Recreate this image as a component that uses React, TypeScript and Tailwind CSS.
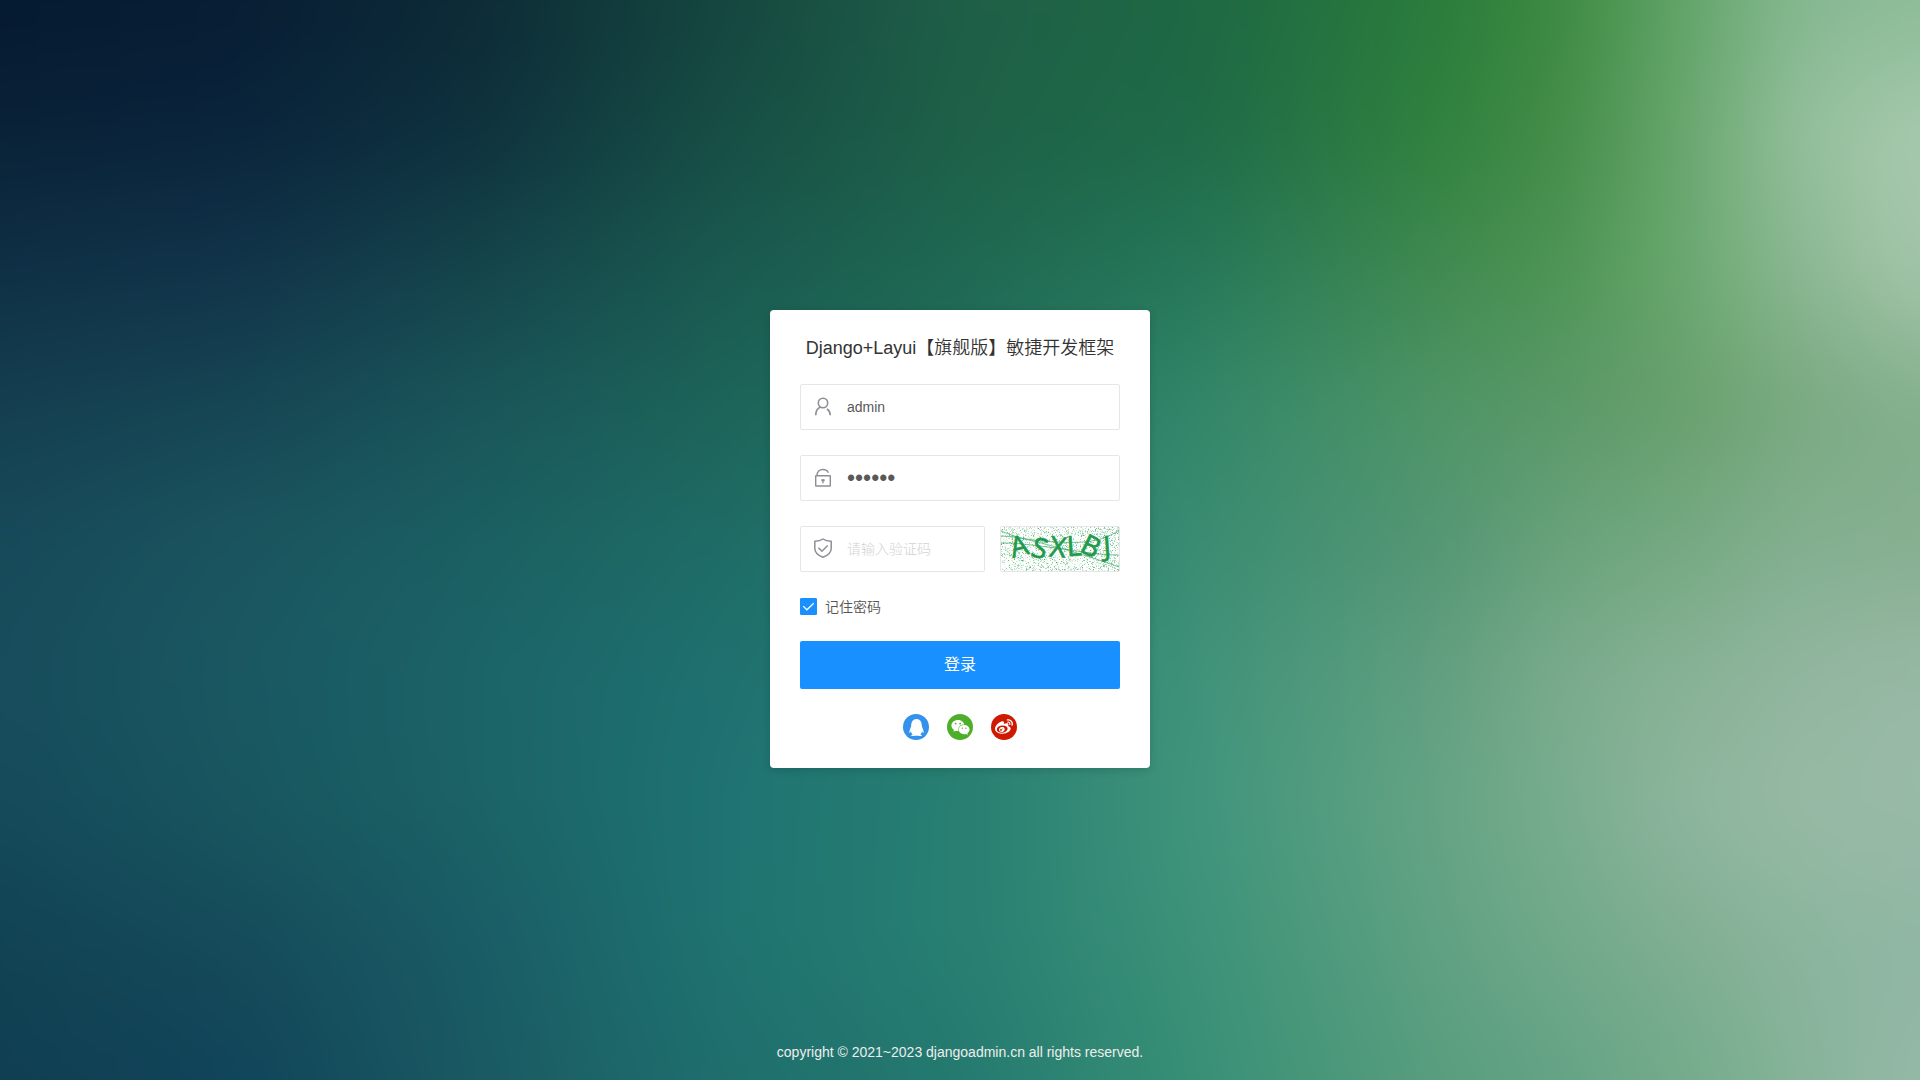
import { useState } from "react";
import { FaQq, FaWeibo, FaWeixin } from "react-icons/fa";

/* Backdrop colours: one row per 1/8 of the height, one colour per entry of STOPS across the width. */
const STOPS = [0, 0.125, 0.25, 0.375, 0.5, 0.625, 0.75, 0.8125, 0.875, 0.9375, 1];
const BACKDROP = [
  ["#051a30", "#081d34", "#0d2b36", "#15463f", "#1f5f48", "#1e6843", "#2a7c3c", "#3c8a40", "#60a468", "#86b891", "#8dbc98"],
  ["#0a2238", "#0a253c", "#0f323e", "#174e45", "#1e6148", "#1f6b48", "#30823e", "#448c48", "#67a66c", "#95c09d", "#a8caaf"],
  ["#0f3045", "#12344a", "#15454b", "#1a5a50", "#1f6852", "#26785a", "#418a50", "#4d9454", "#68a86e", "#8cb893", "#a4c5aa"],
  ["#153f50", "#164654", "#1a565a", "#1d6459", "#23725f", "#33876a", "#4f9566", "#5a9868", "#689f6c", "#79a980", "#84b08e"],
  ["#174a5a", "#1b555f", "#1b6062", "#1f6c66", "#24786a", "#3a8c72", "#549674", "#68a27a", "#74a981", "#83b090", "#86ae8f"],
  ["#184d5c", "#1a5862", "#1c6468", "#1f7170", "#277c70", "#40937a", "#629f80", "#7aab8c", "#88b295", "#92b6a0", "#98b9a5"],
  ["#154a5b", "#18565f", "#1b6366", "#1f7373", "#287f72", "#40957c", "#65a484", "#78ad8f", "#8eb59e", "#97baa4", "#98baa8"],
  ["#114354", "#164b5a", "#1a5c66", "#1f7370", "#287f72", "#3c9278", "#60a182", "#70a98a", "#80ae92", "#8bb59d", "#90b7a4"],
  ["#103e52", "#11445a", "#1a5a62", "#1f6e6d", "#24796f", "#389076", "#589d7e", "#64a285", "#72ab8a", "#86b399", "#96b9a8"],
];

function Backdrop() {
  return (
    <svg
      className="absolute inset-0 h-full w-full"
      viewBox="0 0 1600 900"
      preserveAspectRatio="none"
      aria-hidden="true"
    >
      <defs>
        <filter
          id="soften"
          filterUnits="userSpaceOnUse"
          x="-200"
          y="-200"
          width="2000"
          height="1300"
          colorInterpolationFilters="sRGB"
        >
          <feGaussianBlur stdDeviation="28" />
        </filter>
        {BACKDROP.map((row, i) => (
          <linearGradient key={i} id={`row${i}`} gradientUnits="userSpaceOnUse" x1="0" y1="0" x2="1600" y2="0">
            {row.map((color, j) => (
              <stop key={j} offset={STOPS[j]} stopColor={color} />
            ))}
          </linearGradient>
        ))}
        {BACKDROP.slice(1).map((_, i) => (
          <linearGradient
            key={i}
            id={`fade${i + 1}`}
            gradientUnits="userSpaceOnUse"
            x1="0"
            y1={i * 112.5}
            x2="0"
            y2={(i + 1) * 112.5}
          >
            <stop offset="0" stopColor="#fff" stopOpacity="0" />
            <stop offset="1" stopColor="#fff" stopOpacity="1" />
          </linearGradient>
        ))}
        {BACKDROP.slice(1).map((_, i) => (
          <mask key={i} id={`mask${i + 1}`} maskUnits="userSpaceOnUse" x="-200" y="-200" width="2000" height="1300">
            <rect x="-200" y="-200" width="2000" height="1300" fill={`url(#fade${i + 1})`} />
          </mask>
        ))}
      </defs>
      <g filter="url(#soften)">
        {BACKDROP.map((_, i) => (
          <rect
            key={i}
            x="-200"
            y="-200"
            width="2000"
            height="1300"
            fill={`url(#row${i})`}
            mask={i ? `url(#mask${i})` : undefined}
          />
        ))}
      </g>
    </svg>
  );
}

function UserIcon() {
  return (
    <svg width="18" height="20" viewBox="0 0 18 20" fill="none" stroke="#8e8e96" strokeWidth="1.6" aria-hidden="true">
      <circle cx="9" cy="6" r="4.7" />
      <path d="M1.700 18.200c.1-4.200 2-7.200 5.100-8.200M13 12c2 1.300 3.200 3.500 3.300 6.200" />
    </svg>
  );
}

function LockIcon() {
  return (
    <svg width="18" height="20" viewBox="0 0 18 20" fill="none" stroke="#8e8e96" strokeWidth="1.400" aria-hidden="true">
      <rect x="1.700" y="7.700" width="14.600" height="10.300" rx=".3" />
      <path d="M3 7.700C3 3.700 5.400 1.500 9 1.500c2.600 0 4.500 1.200 5.400 3.300" />
      <path d="M9 11v4.200" strokeWidth="1.400" />
      <path d="M7.300 12.200h3.400" strokeWidth="1.800" />
    </svg>
  );
}

function ShieldIcon() {
  return (
    <svg width="20" height="22" viewBox="0 0 20 22" fill="none" stroke="#8e8e96" strokeWidth="1.500" strokeLinejoin="round" aria-hidden="true">
      <path d="M10 1C7.800 2.500 4.900 3.200 1.800 3.300v7.200c0 3.900 3.500 7 8.200 8.800 4.700-1.800 8.200-4.900 8.200-8.800V3.300C15.100 3.200 12.200 2.500 10 1z" />
      <path d="M5.400 9.800l3.500 3.500 5.800-5.800" />
    </svg>
  );
}

const LETTERS = [
  { char: "A", x: 18, y: 29, turn: -14 },
  { char: "S", x: 39, y: 31, turn: 16 },
  { char: "X", x: 57, y: 30, turn: 6 },
  { char: "L", x: 73, y: 29, turn: -3 },
  { char: "B", x: 90, y: 29, turn: 26 },
  { char: "J", x: 106, y: 29, turn: -4 },
];

/* Speckles come from a fixed seed, so they stay in place between renders. */
function speckles() {
  let seed = 20230;
  const next = () => {
    seed = (seed * 16807) % 2147483647;
    return seed / 2147483647;
  };
  return Array.from({ length: 2400 }, () => ({
    x: Math.floor(next() * 118),
    y: Math.floor(next() * 44),
    alpha: 0.08 + next() * next() * 0.6,
  }));
}
const SPECKLES = speckles();

function Captcha() {
  return (
    <svg viewBox="0 0 118 44" className="block h-11 w-full overflow-visible" aria-hidden="true">
      <rect width="118" height="44" fill="#fff" />
      {SPECKLES.map((dot, i) => (
        <rect key={i} x={dot.x} y={dot.y} width="1" height="1" fill="#1f9a4c" opacity={dot.alpha} />
      ))}
      <g fill="none" stroke="#1f9a4c" strokeOpacity=".6">
        <path d="M0 4c14 6 24 8 40 12s45 12 78 24" />
        <path d="M0 9c20 1 30 5 55 6s45 1 63-12" />
        <path d="M0 16c22 0 36 3 55 5s38 7 63 7" />
      </g>
      <g
        fill="#1f9a4c"
        stroke="#1f9a4c"
        strokeWidth=".7"
        className="font-['Open_Sans',sans-serif] text-[28px] leading-none font-normal"
        textAnchor="middle"
      >
        {LETTERS.map((l) => (
          <text key={l.char} x={l.x} y={l.y} transform={`rotate(${l.turn} ${l.x} ${l.y - 10})`}>
            {l.char}
          </text>
        ))}
      </g>
    </svg>
  );
}

const FIELD =
  "h-[46px] w-full rounded-xs border border-[#e6e6e6] bg-white pr-3 pl-[46px] text-[#595959] outline-none placeholder:font-light placeholder:text-[#d2d2d2] focus:border-[#c9c9c9]";
const FIELD_ICON = "pointer-events-none absolute inset-y-0 left-0 flex w-[46px] items-center justify-center";

export default function App() {
  const [remember, setRemember] = useState(true);

  return (
    <div className="relative flex min-h-screen flex-col overflow-hidden bg-[#1c6568] font-['Liberation_Sans','Noto_Sans_CJK_SC',sans-serif]">
      <Backdrop />
      <main className="relative flex flex-1 items-center justify-center pt-[54px]">
        <form
          className="w-[380px] max-w-full rounded bg-white px-[30px] pt-6 pb-7 shadow-[0_2px_8px_rgba(0,0,0,0.15)]"
          onSubmit={(e) => e.preventDefault()}
        >
          <h1 className="mb-[22px] text-center text-lg leading-7 font-[350] whitespace-nowrap text-[#333]">
            Django+Layui【旗舰版】敏捷开发框架
          </h1>

          <div className="flex flex-col gap-[25px]">
            <label className="relative block text-sm">
              <span className={FIELD_ICON}><UserIcon /></span>
              <input className={FIELD} type="text" aria-label="用户名" defaultValue="admin" />
            </label>
            <label className="relative block text-[23px]">
              <span className={FIELD_ICON}><LockIcon /></span>
              <input className={FIELD} type="password" aria-label="密码" defaultValue="123456" />
            </label>
            <div className="flex gap-[15px]">
              <label className="relative block flex-1 text-sm">
                <span className={FIELD_ICON}><ShieldIcon /></span>
                <input className={FIELD} type="text" aria-label="验证码" placeholder="请输入验证码" />
              </label>
              <button type="button" aria-label="刷新验证码" className="h-[46px] w-[120px] rounded-xs border border-[#e6e6e6]">
                <Captcha />
              </button>
            </div>

            <label className="flex h-[19px] items-center gap-2 text-sm font-[350] text-[#555]">
              <span className="relative size-[17px]">
                <input
                  type="checkbox"
                  checked={remember}
                  onChange={(e) => setRemember(e.target.checked)}
                  className="peer block size-[17px] appearance-none rounded-[1px] border border-[#d2d2d2] bg-white checked:border-[#1890ff] checked:bg-[#1890ff]"
                />
                <svg
                  className="pointer-events-none absolute inset-0 hidden size-[17px] peer-checked:block"
                  viewBox="0 0 17 17"
                  fill="none"
                  stroke="#fff"
                  strokeWidth="1.200"
                  aria-hidden="true"
                >
                  <path d="M3.300 8.300l3.600 3.500 6.800-6.500" />
                </svg>
              </span>
              记住密码
            </label>

            <button type="submit" className="h-12 w-full rounded-xs bg-[#1890ff] text-base font-normal text-white">
              登录
            </button>

            <div className="flex justify-center gap-[18px]">
              <a href="#qq" aria-label="QQ" className="flex size-[26px] items-center justify-center rounded-full bg-[#3492ed] text-white">
                <FaQq size={17} />
              </a>
              <a href="#wechat" aria-label="微信" className="flex size-[26px] items-center justify-center rounded-full bg-[#4daf29] text-white">
                <FaWeixin size={19} />
              </a>
              <a href="#weibo" aria-label="微博" className="flex size-[26px] items-center justify-center rounded-full bg-[#cf1900] text-white">
                <FaWeibo size={18} />
              </a>
            </div>
          </div>
        </form>
      </main>
      <footer className="relative flex h-14 items-center justify-center text-sm text-[#eee]">
        copyright © 2021~2023 djangoadmin.cn all rights reserved.
      </footer>
    </div>
  );
}
